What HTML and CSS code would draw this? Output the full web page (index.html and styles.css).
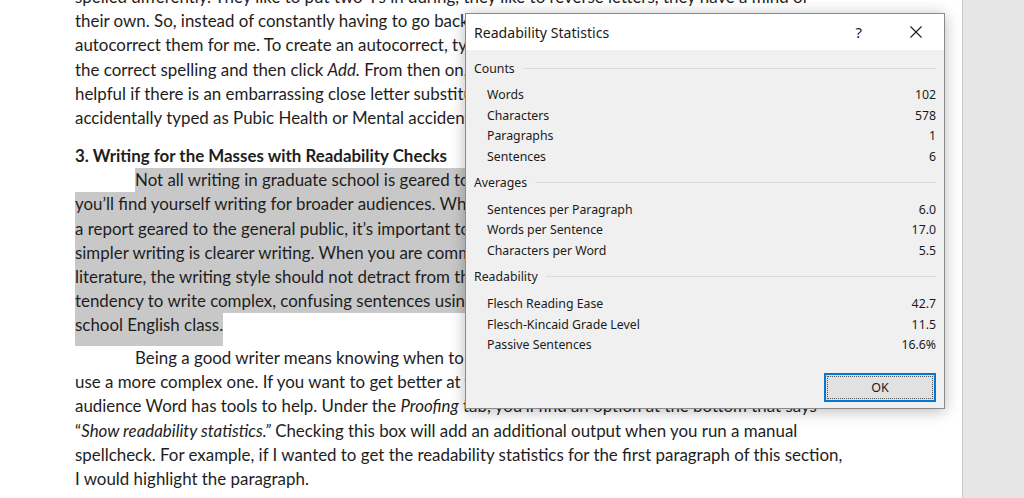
FILE: index.html
```html
<html>
<head>
  <link rel="stylesheet" href="styles.css">
</head>
<body>
  <div id="window">
    <div id="page">
      <div class="para">
        <div class="ln">spelled differently. They like to put two ‘I’s in during, they like to reverse letters, they have a mind of</div>
        <div class="ln">their own. So, instead of constantly having to go back and fix them every time, I have Word</div>
        <div class="ln">autocorrect them for me. To create an autocorrect, type the misspelled word and then type</div>
        <div class="ln">the correct spelling and then click <i>Add.</i> From then on, Word will fix it for you. This is especially</div>
        <div class="ln">helpful if there is an embarrassing close letter substitution, like Public Health being</div>
        <div class="ln">accidentally typed as Pubic Health or Mental accidentally typed as Menial.</div>
      </div>
      <div class="heading">3. Writing for the Masses with Readability Checks</div>
      <div class="para sel">
        <div class="ln first">Not all writing in graduate school is geared to academic audiences. Sometimes</div>
        <div class="ln">you’ll find yourself writing for broader audiences. Whether it is a grant proposal or</div>
        <div class="ln">a report geared to the general public, it’s important to remember that in most cases</div>
        <div class="ln">simpler writing is clearer writing. When you are communicating research or reviewing</div>
        <div class="ln">literature, the writing style should not detract from the content. Many of us have the</div>
        <div class="ln">tendency to write complex, confusing sentences using what we learned in high</div>
        <div class="ln last">school English class.</div>
      </div>
      <div class="para">
        <div class="ln first">Being a good writer means knowing when to use a simple sentence and when to</div>
        <div class="ln">use a more complex one. If you want to get better at writing for a general</div>
        <div class="ln">audience Word has tools to help. Under the <i>Proofing</i> tab, you’ll find an option at the bottom that says</div>
        <div class="ln">“<i>Show readability statistics.”</i> Checking this box will add an additional output when you run a manual</div>
        <div class="ln">spellcheck. For example, if I wanted to get the readability statistics for the first paragraph of this section,</div>
        <div class="ln">I would highlight the paragraph.</div>
      </div>
    </div>
    <div id="side"></div>
  </div>

  <!-- Readability Statistics dialog -->
  <div id="dialog">
    <div class="title">
      <span class="title-text">Readability Statistics</span>
      <span class="help">?</span>
      <svg class="close" width="12" height="12" viewBox="0 0 12 12">
        <path d="M0.5 0.5 L11.5 11.5 M11.5 0.5 L0.5 11.5" stroke="#1a1a1a" stroke-width="1.1" fill="none"/>
      </svg>
    </div>
    <div class="body">
      <div class="group">
        <div class="group-head"><span>Counts</span><hr></div>
        <div class="row"><span>Words</span><span>102</span></div>
        <div class="row"><span>Characters</span><span>578</span></div>
        <div class="row"><span>Paragraphs</span><span>1</span></div>
        <div class="row"><span>Sentences</span><span>6</span></div>
      </div>
      <div class="group">
        <div class="group-head"><span>Averages</span><hr></div>
        <div class="row"><span>Sentences per Paragraph</span><span>6.0</span></div>
        <div class="row"><span>Words per Sentence</span><span>17.0</span></div>
        <div class="row"><span>Characters per Word</span><span>5.5</span></div>
      </div>
      <div class="group">
        <div class="group-head"><span>Readability</span><hr></div>
        <div class="row"><span>Flesch Reading Ease</span><span>42.7</span></div>
        <div class="row"><span>Flesch-Kincaid Grade Level</span><span>11.5</span></div>
        <div class="row"><span>Passive Sentences</span><span>16.6%</span></div>
      </div>
      <div class="buttons">
        <button class="ok"><span>OK</span></button>
      </div>
    </div>
  </div>
</body>
</html>
```

FILE: styles.css
```css
/* page */
body {
  margin: 0;
  height: 498px;
  overflow: hidden;
  background: #ffffff;
}

#window {
  display: flex;
  height: 498px;
}

/* document text */
#page {
  flex: 1;
  margin-top: -15px;
  padding-left: 75px;
  font-family: "Lato", "Liberation Sans", sans-serif;
  font-size: 16.9px;
  line-height: 24.2px;
  color: #1e1e1e;
  overflow: hidden;
}

.ln {
  white-space: nowrap;
}

.ln.first {
  margin-left: 60px;
}

.para {
  margin-bottom: 13.8px;
}

.heading {
  font-weight: bold;
}

/* selected paragraph */
.sel {
  margin-bottom: 0;
}

.sel .ln {
  width: fit-content;
  background: #c8c8c8;
}

.sel .ln.last {
  padding-bottom: 8.4px;
}

/* grey strip right of the page */
#side {
  width: 61px;
  background: #e6e6e6;
  border-left: 1px solid #c9c9c9;
}

/* dialog */
#dialog {
  position: absolute;
  left: 465px;
  top: 13px;
  width: 480px;
  height: 396px;
  box-sizing: border-box;
  border: 1px solid #8a8a8a;
  background: #f0f0f0;
  box-shadow: 0 2px 14px rgba(0, 0, 0, 0.28);
  font-family: "Noto Sans", "Open Sans", sans-serif;
  color: #1b1b1b;
}

#dialog .title {
  display: flex;
  align-items: center;
  height: 36px;
  padding-left: 8px;
  background: #ffffff;
}

#dialog .title-text {
  flex: 1;
  font-size: 14.1px;
}

#dialog .help {
  font-size: 15px;
  margin-right: 48px;
}

#dialog .close {
  margin-right: 22px;
}

#dialog .body {
  padding: 8px 8px 8px 8px;
}

.group {
  margin-bottom: 5px;
}

.group-head {
  display: flex;
  align-items: center;
  height: 20px;
  margin-bottom: 7px;
  font-size: 12.3px;
}

.group-head hr {
  flex: 1;
  margin: 0 0 0 8px;
  border: none;
  border-top: 1px solid #dcdcdc;
}

.row {
  display: flex;
  justify-content: space-between;
  height: 20.7px;
  line-height: 20.7px;
  padding-left: 13px;
  font-size: 12.3px;
}

.buttons {
  display: flex;
  justify-content: flex-end;
  margin-top: 17px;
}

.ok {
  width: 112px;
  height: 29px;
  padding: 2px;
  border: 2px solid #0078d7;
  background: #e1e1e1;
  font-family: "Noto Sans", "Open Sans", sans-serif;
  font-size: 12.5px;
  color: #1b1b1b;
}

.ok span {
  display: flex;
  align-items: center;
  justify-content: center;
  height: 100%;
  outline: 1px dotted #555;
}
```
